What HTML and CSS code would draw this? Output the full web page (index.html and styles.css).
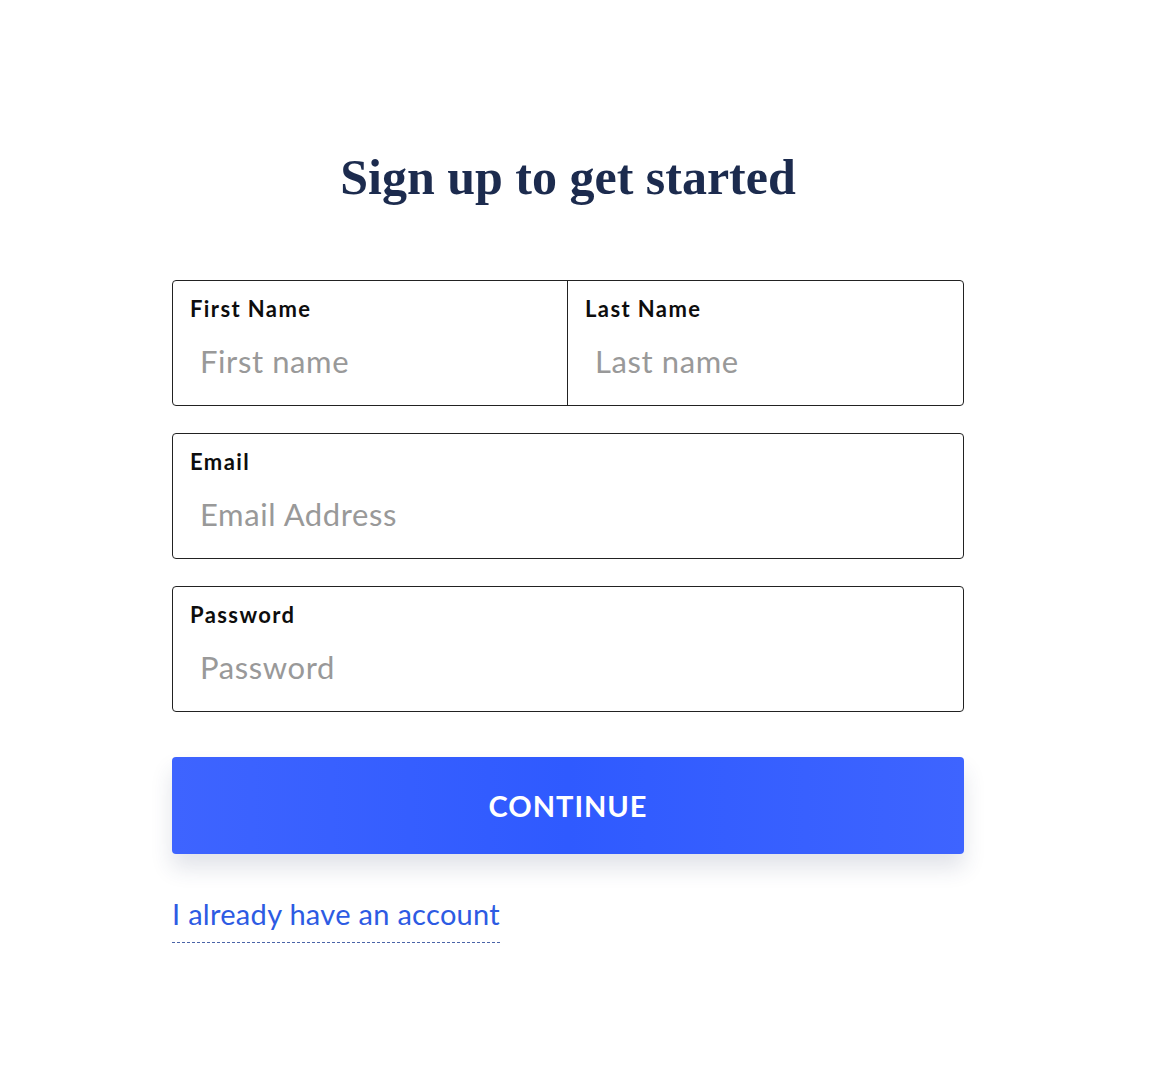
FILE: index.html
```html
<!DOCTYPE html>
<html lang="en">
<head>
<meta charset="utf-8">
<title>Sign up</title>
<link rel="stylesheet" href="styles.css">
</head>
<body>
<main class="page">
  <h1 class="title">Sign up to get started</h1>
  <form class="form">
    <div class="field-row">
      <label class="field field-half">
        <span class="field-label">First Name</span>
        <input class="field-input" type="text" placeholder="First name">
      </label>
      <label class="field field-half field-right">
        <span class="field-label">Last Name</span>
        <input class="field-input" type="text" placeholder="Last name">
      </label>
    </div>
    <label class="field field-box">
      <span class="field-label">Email</span>
      <input class="field-input" type="email" placeholder="Email Address">
    </label>
    <label class="field field-box">
      <span class="field-label">Password</span>
      <input class="field-input" type="password" placeholder="Password">
    </label>
    <button class="btn" type="button">CONTINUE</button>
    <div class="alt">
      <a class="alt-link" href="#">I already have an account</a>
    </div>
  </form>
</main>
</body>
</html>
```

FILE: styles.css
```css
* { box-sizing: border-box; }
html, body {
  margin: 0;
  padding: 0;
  background: #ffffff;
}
body {
  font-family: Lato, "Liberation Sans", sans-serif;
  color: #111;
}
.page {
  width: 792px;
  margin-left: 172px;
  padding-top: 142px;
}
.title {
  margin: 0;
  text-align: center;
  font-family: "Liberation Serif", serif;
  font-weight: 700;
  font-size: 50px;
  line-height: 70px;
  color: #1c2b4e;
}
.form {
  margin-top: 68px;
  display: flex;
  flex-direction: column;
  gap: 27px;
}
.field-row {
  display: flex;
  border: 1px solid #222;
  border-radius: 4px;
  height: 126px;
}
.field {
  display: flex;
  flex-direction: column;
  padding: 13px 17px 0;
  min-width: 0;
}
.field-half {
  flex: 0 0 394px;
}
.field-right {
  flex: 1 1 auto;
  border-left: 1px solid #222;
}
.field-box {
  border: 1px solid #222;
  border-radius: 4px;
  height: 126px;
}
.field-label {
  font-weight: 700;
  font-size: 22px;
  line-height: 30px;
  letter-spacing: 1.4px;
  color: #0d0d0d;
}
.field-input {
  margin-top: 17px;
  width: 100%;
  min-width: 0;
  border: 0;
  outline: none;
  padding: 0 0 0 10px;
  font-family: Lato, "Liberation Sans", sans-serif;
  font-size: 31px;
  line-height: 40px;
  height: 40px;
  letter-spacing: 0.6px;
  color: #111;
  background: transparent;
}
.field-input::placeholder {
  color: #999999;
}
.btn {
  margin-top: 18px;
  height: 97px;
  border: 0;
  border-radius: 4px;
  background: linear-gradient(90deg, #3e64ff 0%, #2f5aff 50%, #3e64ff 100%);
  box-shadow: 0 14px 22px rgba(40, 60, 100, 0.14);
  color: #fff;
  font-family: Lato, "Liberation Sans", sans-serif;
  font-weight: 700;
  font-size: 29px;
  letter-spacing: 1px;
  cursor: pointer;
}
.alt {
  margin-top: 15px;
}
.alt-link {
  display: inline-block;
  font-size: 29px;
  line-height: 36px;
  letter-spacing: 0.3px;
  color: #2d5be3;
  text-decoration: none;
  border-bottom: 1px dashed #4a64a8;
  padding-bottom: 10px;
}
```
